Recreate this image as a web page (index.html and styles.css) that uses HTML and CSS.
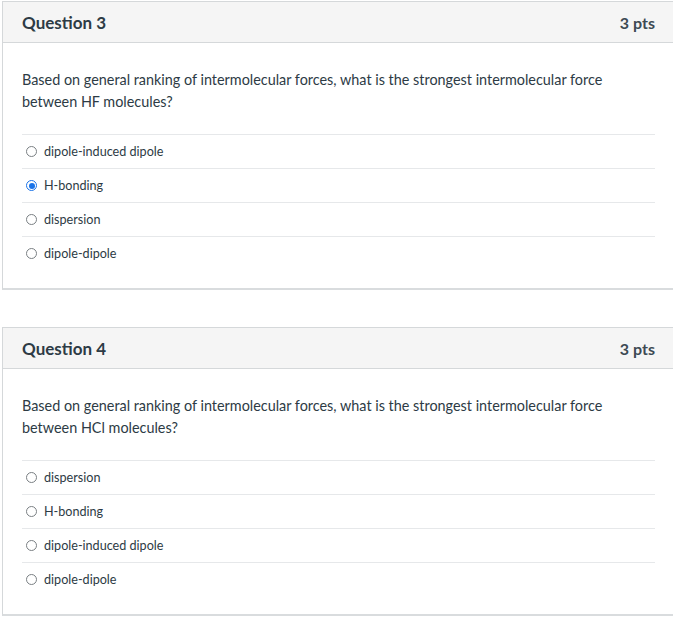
FILE: index.html
```html
<!DOCTYPE html>
<html>
<head>
<meta charset="utf-8">
<link rel="stylesheet" href="styles.css">
</head>
<body>
<div class="page">
  <div class="card">
    <div class="card-header">
      <span class="title">Question 3</span>
      <span class="pts">3 pts</span>
    </div>
    <div class="card-body">
      <p class="question">Based on general ranking of intermolecular forces, what is the strongest intermolecular force between HF molecules?</p>
      <div class="answers">
        <div class="answer"><span class="radio"></span><span>dipole-induced dipole</span></div>
        <div class="answer"><span class="radio checked"></span><span>H-bonding</span></div>
        <div class="answer"><span class="radio"></span><span>dispersion</span></div>
        <div class="answer"><span class="radio"></span><span>dipole-dipole</span></div>
      </div>
    </div>
  </div>
  <div class="card">
    <div class="card-header">
      <span class="title">Question 4</span>
      <span class="pts">3 pts</span>
    </div>
    <div class="card-body">
      <p class="question">Based on general ranking of intermolecular forces, what is the strongest intermolecular force between HCl molecules?</p>
      <div class="answers">
        <div class="answer"><span class="radio"></span><span>dispersion</span></div>
        <div class="answer"><span class="radio"></span><span>H-bonding</span></div>
        <div class="answer"><span class="radio"></span><span>dipole-induced dipole</span></div>
        <div class="answer"><span class="radio"></span><span>dipole-dipole</span></div>
      </div>
    </div>
  </div>
</div>
</body>
</html>
```

FILE: styles.css
```css
html, body {
  margin: 0;
  padding: 0;
  background: #fff;
  overflow: hidden;
}
body {
  font-family: Lato, "Liberation Sans", sans-serif;
  color: #2d3b45;
}
.page {
  padding: 1px 0 0 2px;
  width: 676px;
  display: flex;
  flex-direction: column;
  gap: 37px;
}
.card {
  border: 1px solid #d5d8da;
  border-bottom: 2px solid #d9dcde;
  box-sizing: border-box;
  width: 674px;
}
.card-header {
  height: 40px;
  background: #f5f5f5;
  border-bottom: 1px solid #d5d8da;
  display: flex;
  justify-content: space-between;
  align-items: center;
  padding: 0 20px 0 19px;
}
.title {
  font-size: 17px;
  font-weight: 700;
}
.pts {
  font-size: 16px;
  font-weight: 700;
  color: #3d4a53;
}
.card-body {
  padding: 26px 20px 18px 19px;
}
.question {
  margin: 0 0 21px 0;
  font-size: 14.4px;
  line-height: 22px;
  padding-right: 20px;
}
.answers {
  border-top: 1px solid #e6e8ea;
}
.answer {
  height: 33px;
  display: flex;
  align-items: center;
  gap: 7px;
  font-size: 12.6px;
  padding-left: 4px;
  border-bottom: 1px solid #e6e8ea;
}
.answer:last-child {
  border-bottom: none;
}
.radio {
  width: 11px;
  height: 11px;
  border: 1px solid #7a7f83;
  border-radius: 50%;
  box-sizing: border-box;
  flex: none;
  position: relative;
}
.radio.checked {
  border-color: #1a73e8;
}
.radio.checked::after {
  content: "";
  position: absolute;
  left: 1.5px;
  top: 1.5px;
  width: 6px;
  height: 6px;
  border-radius: 50%;
  background: #1a73e8;
}
```
